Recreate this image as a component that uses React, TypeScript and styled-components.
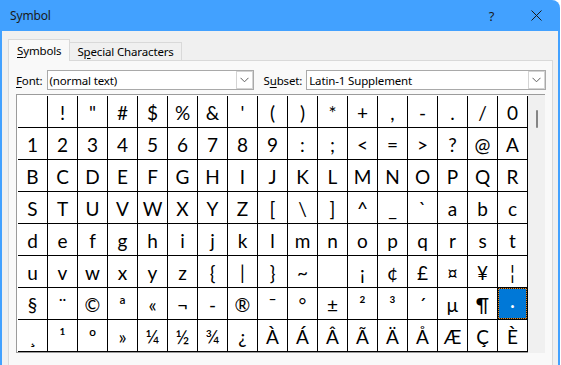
import styled, { createGlobalStyle } from "styled-components";

const GlobalStyle = createGlobalStyle`
  html, body {
    margin: 0;
    padding: 0;
    background: #ffffff;
  }
  body {
    font-family: "Noto Sans", "Open Sans", sans-serif;
    font-size: 11.5px;
    letter-spacing: -0.15px;
    color: #000000;
  }
`;

const Window = styled.div`
  width: 560px;
  height: 365px;
  box-sizing: border-box;
  display: flex;
  flex-direction: column;
  background: #42a1ff;
  border-top-right-radius: 8px;
  padding: 0 2px;
  overflow: hidden;
`;

const TitleBar = styled.div`
  height: 31px;
  flex: none;
  display: flex;
  align-items: center;
  padding-left: 8px;
`;

const TitleText = styled.div`
  flex: 1;
  font-size: 12px;
  color: #1a1a1a;
`;

const TitleButton = styled.div<{ $width: number }>`
  width: ${(p) => p.$width}px;
  height: 31px;
  display: flex;
  align-items: center;
  justify-content: center;
  font-size: 13px;
  color: #1a1a1a;
`;

const Body = styled.div`
  flex: 1;
  background: #f0f0f0;
  padding: 8px 5px 0 6px;
  display: flex;
  flex-direction: column;
`;

const TabStrip = styled.div`
  display: flex;
  align-items: flex-end;
  height: 22px;
  margin-bottom: -1px;
  position: relative;
  z-index: 1;
`;

const Tab = styled.div<{ $active?: boolean }>`
  box-sizing: border-box;
  height: ${(p) => (p.$active ? 22 : 19)}px;
  padding: 0 ${(p) => (p.$active ? 8 : 7)}px;
  display: flex;
  align-items: center;
  border: 1px solid #d9d9d9;
  border-bottom: ${(p) => (p.$active ? "none" : "1px solid #d9d9d9")};
  border-left: ${(p) => (p.$active ? "1px solid #d9d9d9" : "none")};
  background: ${(p) => (p.$active ? "#f9f9f9" : "#f0f0f0")};
  color: #000;
  u {
    text-decoration: underline;
    text-underline-offset: 2px;
  }
`;

const TabPanel = styled.div`
  flex: 1;
  border: 1px solid #d9d9d9;
  border-bottom: none;
  background: #f9f9f9;
  padding: 9px 6px 0 7px;
  display: flex;
  flex-direction: column;
`;

const FieldRow = styled.div`
  display: flex;
  align-items: center;
  height: 20px;
  margin-bottom: 4px;
`;

const Label = styled.div<{ $gapBefore?: number }>`
  margin-left: ${(p) => p.$gapBefore ?? 0}px;
  margin-right: 4px;
  white-space: nowrap;
  u {
    text-underline-offset: 2px;
  }
`;

const Combo = styled.div<{ $width?: number }>`
  box-sizing: border-box;
  height: 20px;
  ${(p) => (p.$width ? `width: ${p.$width}px;` : "flex: 1;")}
  display: flex;
  align-items: stretch;
  border: 1px solid #a9a9a9;
  background: #ffffff;
`;

const ComboText = styled.div`
  flex: 1;
  display: flex;
  align-items: center;
  padding-left: 2px;
  white-space: nowrap;
`;

const ComboButton = styled.div`
  box-sizing: border-box;
  width: 17px;
  display: flex;
  align-items: center;
  justify-content: center;
  border: 1px solid #d4d4d4;
  background: #ffffff;
`;

const Frame = styled.div`
  display: flex;
  align-items: flex-start;
`;

const GridBox = styled.div`
  border-top: 1px solid #9b9b9b;
  border-left: 1px solid #9b9b9b;
  border-bottom: 1px solid #9b9b9b;
  padding: 1px 0 0 1px;
  background: #ffffff;
`;

const CharGrid = styled.div`
  display: grid;
  grid-template-columns: repeat(17, 30px);
  grid-auto-rows: 32px;
`;

const Cell = styled.div<{ $selected?: boolean }>`
  position: relative;
  box-sizing: border-box;
  border-right: 1px solid #000;
  border-bottom: 1px solid #000;
  display: flex;
  align-items: center;
  justify-content: center;
  padding-top: 2px;
  font-family: "Lato", "Open Sans", sans-serif;
  font-size: 19px;
  letter-spacing: 0;
  line-height: 1;
  color: ${(p) => (p.$selected ? "#ffffff" : "#000000")};
  background: ${(p) => (p.$selected ? "#0078d7" : "#ffffff")};
  ${(p) =>
    p.$selected &&
    `
    box-shadow: inset 0 0 0 1px #e8891c;
    &::after {
      content: "";
      position: absolute;
      inset: 0;
      border: 1px dotted #1a1a1a;
    }
  `}
`;

const ScrollTrack = styled.div`
  width: 17px;
  height: 259px;
  border-top: 1px solid #9b9b9b;
  background: #f0f0f0;
  display: flex;
  justify-content: center;
  padding-top: 15px;
  box-sizing: border-box;
`;

const ScrollThumb = styled.div`
  width: 2px;
  height: 18px;
  border-radius: 1px;
  background: #858585;
`;

const Chevron = () => (
  <svg width="9" height="6" viewBox="0 0 9 6">
    <path d="M0.5 0.8 L4.5 4.8 L8.5 0.8" fill="none" stroke="#5f5f5f" strokeWidth="1" />
  </svg>
);

const CloseIcon = () => (
  <svg width="11" height="11" viewBox="0 0 11 11">
    <path d="M0.5 0.5 L10.5 10.5 M10.5 0.5 L0.5 10.5" stroke="#1a1a1a" strokeWidth="1" />
  </svg>
);

const chars: string[] = [];
for (let c = 0x20; c <= 0x7e; c++) chars.push(String.fromCharCode(c));
for (let c = 0xa0; c <= 0xc8; c++) {
  if (c === 0xa0) chars.push("");
  else if (c === 0xad) chars.push("-");
  else chars.push(String.fromCharCode(c));
}

const SELECTED = chars.indexOf("\u00b7");

export default function App() {
  return (
    <>
      <GlobalStyle />
      <Window>
        <TitleBar>
          <TitleText>Symbol</TitleText>
          <TitleButton $width={45}>?</TitleButton>
          <TitleButton $width={44}>
            <CloseIcon />
          </TitleButton>
        </TitleBar>
        <Body>
          <TabStrip>
            <Tab $active>
              <u>S</u>ymbols
            </Tab>
            <Tab>
              S<u>p</u>ecial Characters
            </Tab>
          </TabStrip>
          <TabPanel>
            <FieldRow>
              <Label>
                <u>F</u>ont:
              </Label>
              <Combo $width={207}>
                <ComboText>(normal text)</ComboText>
                <ComboButton>
                  <Chevron />
                </ComboButton>
              </Combo>
              <Label $gapBefore={10}>
                S<u>u</u>bset:
              </Label>
              <Combo>
                <ComboText>Latin-1 Supplement</ComboText>
                <ComboButton>
                  <Chevron />
                </ComboButton>
              </Combo>
            </FieldRow>
            <Frame>
              <GridBox>
                <CharGrid>
                  {chars.map((ch, i) => (
                    <Cell key={i} $selected={i === SELECTED}>
                      {ch}
                    </Cell>
                  ))}
                </CharGrid>
              </GridBox>
              <ScrollTrack>
                <ScrollThumb />
              </ScrollTrack>
            </Frame>
          </TabPanel>
        </Body>
      </Window>
    </>
  );
}
